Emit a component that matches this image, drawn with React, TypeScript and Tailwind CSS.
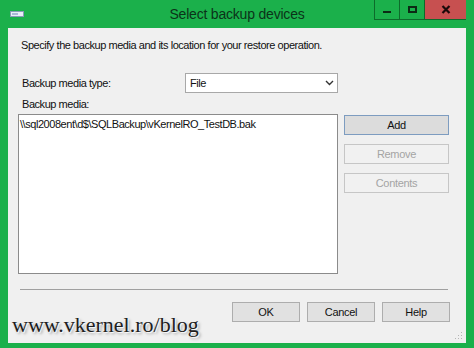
import React from 'react';

const ui = { fontFamily: '"Liberation Sans", Arial, sans-serif' };

function WinButton({ label, primary, disabled, className }: { label: string; primary?: boolean; disabled?: boolean; className?: string }) {
  const tone = disabled
    ? 'border-[#c6c6c6] bg-[#f1f1f1] text-[#a4a4a4]'
    : primary
      ? 'border-[#7d9cc0] bg-[#dcdcdc] text-[#111]'
      : 'border-[#adadad] bg-[#e1e1e1] text-[#111]';
  return (
    <div className={`flex h-[20px] items-center justify-center border text-[11px] tracking-[-0.3px] ${tone} ${className ?? ''}`}>
      {label}
    </div>
  );
}

export default function App() {
  return (
    <div className="relative h-[348px] w-[474px] overflow-hidden bg-[#1bb04b]" style={ui}>
      {/* Title bar */}
      <div className="grid h-[28px] grid-cols-[100px_1fr_100px] px-2">
        <div className="flex items-start pt-[11px] pl-[2px]">
          <svg width="14" height="6" viewBox="0 0 14 6">
            <rect x="0.5" y="0.5" width="13" height="5" fill="#e8eef8" stroke="#8a9bb8" />
            <rect x="2" y="2" width="6" height="2" fill="#a9b9d6" />
          </svg>
        </div>
        <div className="pt-[4px] text-center text-[14px] tracking-[-0.2px] text-[#0b3319]">Select backup devices</div>
        <div className="flex items-start justify-end">
          <div className="flex h-[20px] border-b border-l border-[#0d6b2b]">
            <div className="flex w-[25px] items-center justify-center border-r border-[#0d6b2b]">
              <div className="mt-[4px] h-[2px] w-[8px] bg-[#0c2a15]" />
            </div>
            <div className="flex w-[25px] items-center justify-center border-r border-[#0d6b2b]">
              <div className="h-[7px] w-[9px] border-2 border-[#0c2a15]" />
            </div>
            <div className="flex w-[41px] items-center justify-center bg-[#c75050]">
              <svg width="10" height="9" viewBox="0 0 10 9">
                <path d="M1.5 1 L8.5 8 M8.5 1 L1.5 8" stroke="#1a0a0a" strokeWidth="2.2" />
              </svg>
            </div>
          </div>
        </div>
      </div>

      {/* Dialog body */}
      <div className="relative mx-2 h-[315px] bg-[#f0f0f0] px-[10px] text-[11px] tracking-[-0.45px] text-[#111]">
        <div className="ml-[3px] pt-[11px] leading-[13px]">Specify the backup media and its location for your restore operation.</div>

        <div className="mt-[21px] flex w-[320px] items-center justify-between">
          <span className="ml-[4px]">Backup media type:</span>
          <div className="flex h-[20px] w-[153px] items-center justify-between border border-[#a8a8a8] bg-white pl-[4px] pr-[3px]">
            <span>File</span>
            <svg width="9" height="6" viewBox="0 0 9 6">
              <path d="M1 1 L4.5 4.5 L8 1" fill="none" stroke="#333" strokeWidth="1.4" />
            </svg>
          </div>
        </div>

        <div className="ml-[4px] mt-[5px] leading-[13px]">Backup media:</div>

        <div className="mt-[3px] flex gap-[6px]">
          <div className="h-[160px] w-[320px] border border-[#8b8b8b] bg-white px-[1px] pt-[3px] leading-[13px]">
            \\sql2008ent\d$\SQLBackup\vKernelRO_TestDB.bak
          </div>
          <div className="flex w-[105px] flex-col gap-[9px] pt-[1px]">
            <WinButton label="Add" primary />
            <WinButton label="Remove" disabled />
            <WinButton label="Contents" disabled />
          </div>
        </div>

        <div className="ml-[2px] mt-[15px] h-[1px] w-[428px] bg-[#a0a0a0]" />

        <div className="mt-[12px] flex w-[432px] justify-end gap-[7px]">
          <WinButton label="OK" className="w-[68px]" />
          <WinButton label="Cancel" className="w-[68px]" />
          <WinButton label="Help" className="w-[68px]" />
        </div>

        {/* size grip */}
        <svg className="absolute bottom-[3px] right-[3px]" width="8" height="8" viewBox="0 0 8 8">
          <g fill="#b5b5b5">
            <rect x="6" y="0" width="1" height="1" />
            <rect x="3" y="3" width="1" height="1" />
            <rect x="6" y="3" width="1" height="1" />
            <rect x="0" y="6" width="1" height="1" />
            <rect x="3" y="6" width="1" height="1" />
            <rect x="6" y="6" width="1" height="1" />
          </g>
        </svg>
      </div>

      {/* watermark */}
      <div
        className="absolute left-[12px] top-[314px] text-[22px] leading-none text-[#1e1e1e] [text-shadow:1px_1px_1px_#ffffff,2px_2px_3px_rgba(0,0,0,0.35)]"
        style={{ fontFamily: '"Liberation Serif", "Times New Roman", serif' }}
      >
        www.vkernel.ro/blog
      </div>
    </div>
  );
}
